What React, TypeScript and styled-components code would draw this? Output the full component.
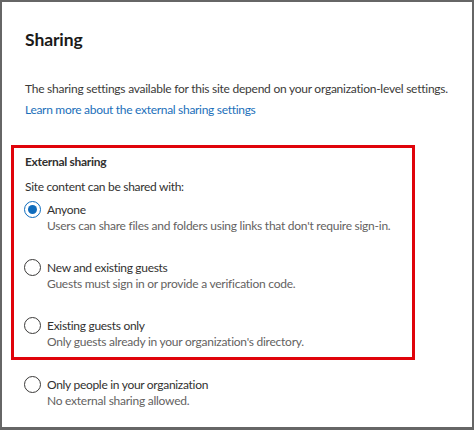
import React from "react";
import styled, { createGlobalStyle } from "styled-components";

const GlobalStyle = createGlobalStyle`
  html, body {
    margin: 0;
    padding: 0;
    background: #fff;
  }
`;

const Frame = styled.div`
  width: 474px;
  height: 430px;
  box-sizing: border-box;
  border-style: solid;
  border-color: #666666;
  border-width: 2px 2px 3px 2px;
  background: #fff;
  font-family: Lato, "Open Sans", sans-serif;
  font-size: 12px;
  letter-spacing: -0.3px;
  color: #323130;
  overflow: hidden;
`;

const Content = styled.div`
  display: flex;
  flex-direction: column;
  padding: 26px 0 0 23px;
`;

const Title = styled.h1`
  margin: 0;
  font-size: 17.5px;
  line-height: 24px;
  font-weight: 700;
  letter-spacing: -0.1px;
  color: #1b1a19;
`;

const Description = styled.p`
  margin: 26px 0 0;
  font-size: 12px;
  line-height: 21px;
  letter-spacing: -0.25px;
  color: #3b3a39;
`;

const LearnLink = styled.a`
  font-size: 12px;
  line-height: 21px;
  color: #1b6fba;
  text-decoration: none;
`;

const Highlight = styled.div`
  display: flex;
  flex-direction: column;
  width: 404px;
  box-sizing: border-box;
  margin: 25px 0 0 -14px;
  padding: 6px 0 7px 11px;
  border: 3px solid #e0040b;
`;

const SectionLabel = styled.div`
  line-height: 16px;
  font-weight: 700;
  color: #323130;
`;

const Prompt = styled.div`
  margin: 9px 0 6px;
  line-height: 16px;
  color: #323130;
`;

const Options = styled.div`
  display: flex;
  flex-direction: column;
  gap: 25px;
`;

const Option = styled.label`
  display: grid;
  grid-template-columns: 16px 1fr;
  column-gap: 6px;
  align-items: center;
  cursor: pointer;
`;

const Circle = styled.span<{ $checked: boolean }>`
  width: 17px;
  height: 17px;
  box-sizing: border-box;
  border-radius: 50%;
  border: 1px solid ${(p) => (p.$checked ? "#0f6cbd" : "#3b3a39")};
  display: flex;
  align-items: center;
  justify-content: center;
  margin-left: -1px;

  &::after {
    content: "";
    display: ${(p) => (p.$checked ? "block" : "none")};
    width: 9px;
    height: 9px;
    border-radius: 50%;
    background: #0f6cbd;
  }
`;

const OptionLabel = styled.span`
  line-height: 16px;
  color: #323130;
`;

const OptionHint = styled.span`
  grid-column: 2;
  line-height: 16px;
  letter-spacing: -0.25px;
  color: #64625f;
`;

const Outside = styled.div`
  margin-top: 16px;
`;

type Choice = { id: string; label: string; hint: string };

const insideChoices: Choice[] = [
  {
    id: "anyone",
    label: "Anyone",
    hint: "Users can share files and folders using links that don't require sign-in.",
  },
  {
    id: "new",
    label: "New and existing guests",
    hint: "Guests must sign in or provide a verification code.",
  },
  {
    id: "existing",
    label: "Existing guests only",
    hint: "Only guests already in your organization's directory.",
  },
];

const orgOnly: Choice = {
  id: "org",
  label: "Only people in your organization",
  hint: "No external sharing allowed.",
};

const RadioOption = ({
  choice,
  selected,
  onSelect,
}: {
  choice: Choice;
  selected: string;
  onSelect: (id: string) => void;
}) => (
  <Option onClick={() => onSelect(choice.id)}>
    <Circle $checked={selected === choice.id} />
    <OptionLabel>{choice.label}</OptionLabel>
    <OptionHint>{choice.hint}</OptionHint>
  </Option>
);

const App = () => {
  const [selected, setSelected] = React.useState("anyone");

  return (
    <>
      <GlobalStyle />
      <Frame>
        <Content>
          <Title>Sharing</Title>
          <Description>
            The sharing settings available for this site depend on your organization-level settings.
          </Description>
          <LearnLink href="#">Learn more about the external sharing settings</LearnLink>

          <Highlight>
            <SectionLabel>External sharing</SectionLabel>
            <Prompt>Site content can be shared with:</Prompt>
            <Options>
              {insideChoices.map((c) => (
                <RadioOption key={c.id} choice={c} selected={selected} onSelect={setSelected} />
              ))}
            </Options>
          </Highlight>

          <Outside>
            <RadioOption choice={orgOnly} selected={selected} onSelect={setSelected} />
          </Outside>
        </Content>
      </Frame>
    </>
  );
};

export default App;
